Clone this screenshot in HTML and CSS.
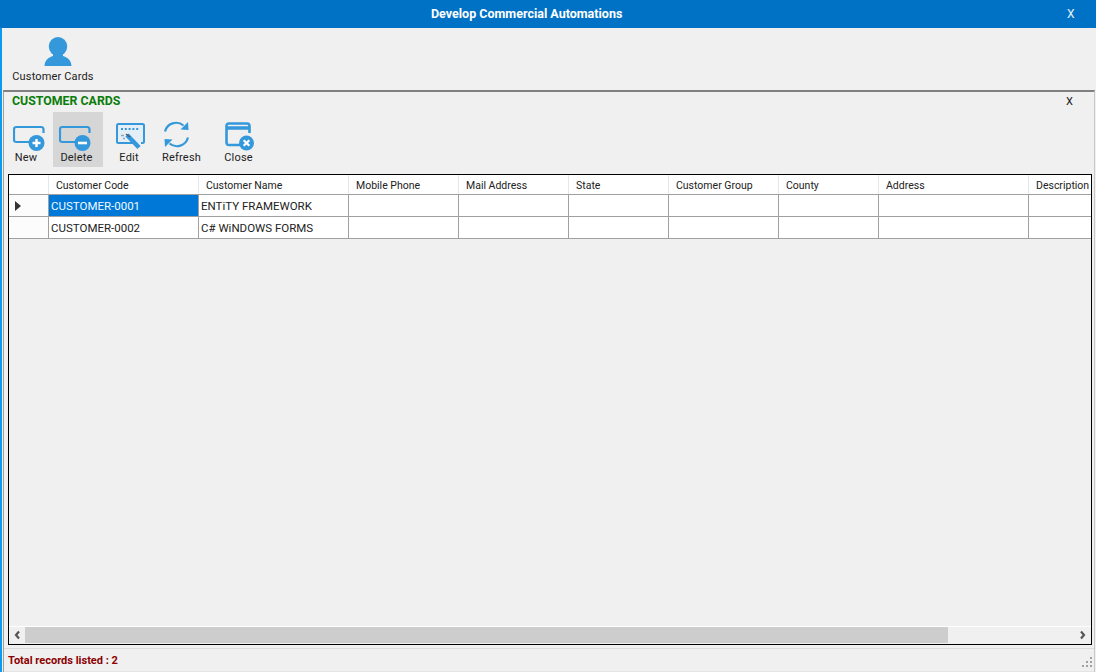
FILE: index.html
```html
<!DOCTYPE html>
<html lang="en">
<head>
<meta charset="utf-8">
<title>Develop Commercial Automations</title>
<link rel="stylesheet" href="styles.css">
</head>
<body>
<div class="app">
  <header class="titlebar">
    <span class="title">Develop Commercial Automations</span>
    <span class="close-x">X</span>
  </header>
  <div class="main">
    <nav class="ribbon">
      <div class="ribbon-item">
        <svg class="user-icon" width="30" height="30" viewBox="0 0 30 30"><ellipse cx="15" cy="9.500" rx="9.200" ry="9.500" fill="#3498db"/><path d="M10 16 L20 16 L20 19 C24 20.500 28 22 28.500 29 L1.500 29 C2 22 6 20.500 10 19Z" fill="#3498db"/></svg>
        <span class="ribbon-label">Customer Cards</span>
      </div>
    </nav>
    <section class="panel">
      <div class="panel-head">
        <h1 class="panel-title">CUSTOMER CARDS</h1>
        <span class="panel-x">X</span>
      </div>
      <div class="toolbar">
        <div class="tool tool-new">
          <svg width="32" height="26" viewBox="0 0 32 26"><path d="M1 15V4.500Q1 2 3.500 2H28Q30.500 2 30.500 4.500V8M1 15Q1 17 3.500 17H16" fill="none" stroke="#3498db" stroke-width="2.200"/><circle cx="23.500" cy="18" r="8" fill="#3498db"/><path d="M19.500 18H27.500M23.500 14V22" stroke="#fff" stroke-width="2.400"/></svg>
          <span>New</span>
        </div>
        <div class="tool tool-delete">
          <svg width="32" height="26" viewBox="0 0 32 26"><path d="M1 15V4.500Q1 2 3.500 2H28Q30.500 2 30.500 4.500V8M1 15Q1 17 3.500 17H16" fill="none" stroke="#3498db" stroke-width="2.200"/><circle cx="23.500" cy="18" r="8" fill="#3498db"/><path d="M19 18H28" stroke="#fff" stroke-width="2.600"/></svg>
          <span>Delete</span>
        </div>
        <div class="tool tool-edit">
          <svg width="30" height="28" viewBox="0 0 30 28"><path d="M18 20H2.500Q1 20 1 18.500V2.500Q1 1 2.500 1H26.500Q28 1 28 2.500V18.500Q28 20 26.500 20H25" fill="#e3eef6" stroke="#3498db" stroke-width="2"/><path d="M5 6H24" stroke="#3498db" stroke-width="1.800" stroke-dasharray="2 1.800"/><path d="M5 12.500H8M7 15.500H9" stroke="#8fa6b5" stroke-width="1.500"/><path d="M11 12L23 24.500" stroke="#3498db" stroke-width="4.500"/><path d="M10 11L14 14" stroke="#4a5a66" stroke-width="1.500"/></svg>
          <span>Edit</span>
        </div>
        <div class="tool tool-refresh">
          <svg width="27" height="27" viewBox="0 0 27 27"><path d="M2 10.500A11.500 11.500 0 0 1 20.500 4.500M25 16.500A11.500 11.500 0 0 1 6.500 22.500" fill="none" stroke="#3498db" stroke-width="2.200"/><path d="M17.500 8.500L25.500 9L25 1Z" fill="#3498db"/><path d="M9.500 18.500L1.500 18L2 26Z" fill="#3498db"/></svg>
          <span>Refresh</span>
        </div>
        <div class="tool tool-close">
          <svg width="30" height="29" viewBox="0 0 30 29"><path d="M15 23H4Q1.500 23 1.500 20.500V4Q1.500 1.500 4 1.500H22Q24.500 1.500 24.500 4V11" fill="none" stroke="#3498db" stroke-width="2.600"/><path d="M2 6H24" stroke="#3498db" stroke-width="3.500"/><circle cx="21.500" cy="21" r="7.500" fill="#3498db"/><path d="M18.700 18.200L24.300 23.800M24.300 18.200L18.700 23.800" stroke="#fff" stroke-width="2.200"/></svg>
          <span>Close</span>
        </div>
      </div>
      <div class="grid-box">
        <div class="grid-area">
          <div class="row header-row">
            <div class="cell head-corner"></div>
            <div class="cell head">Customer Code</div>
            <div class="cell head">Customer Name</div>
            <div class="cell head">Mobile Phone</div>
            <div class="cell head">Mail Address</div>
            <div class="cell head">State</div>
            <div class="cell head">Customer Group</div>
            <div class="cell head">County</div>
            <div class="cell head">Address</div>
            <div class="cell head">Description</div>
          </div>
          <div class="row data-row">
            <div class="cell row-head"><span class="arrow"></span></div>
            <div class="cell selected">CUSTOMER-0001</div>
            <div class="cell">ENTiTY FRAMEWORK</div>
            <div class="cell"></div><div class="cell"></div><div class="cell"></div><div class="cell"></div><div class="cell"></div><div class="cell"></div><div class="cell"></div>
          </div>
          <div class="row data-row">
            <div class="cell row-head"></div>
            <div class="cell">CUSTOMER-0002</div>
            <div class="cell">C# WiNDOWS FORMS</div>
            <div class="cell"></div><div class="cell"></div><div class="cell"></div><div class="cell"></div><div class="cell"></div><div class="cell"></div><div class="cell"></div>
          </div>
        </div>
        <div class="hscroll">
          <svg class="chev" width="16" height="16" viewBox="0 0 16 16"><path d="M10 4.500L7 8L10 11.500" fill="none" stroke="#555" stroke-width="2.200"/></svg>
          <div class="track"><div class="thumb"></div></div>
          <svg class="chev" width="16" height="16" viewBox="0 0 16 16"><path d="M6 4.500L9 8L6 11.500" fill="none" stroke="#555" stroke-width="2.200"/></svg>
        </div>
      </div>
      <footer class="status">
        <span class="status-text">Total records listed : 2</span>
        <svg class="grip" width="12" height="12" viewBox="0 0 12 12"><path d="M9 1h2v2H9zM5 5h2v2H5zM9 5h2v2H9zM1 9h2v2H1zM5 9h2v2H5zM9 9h2v2H9z" fill="#a0a0a0"/></svg>
      </footer>
    </section>
  </div>
</div>
</body>
</html>
```
FILE: styles.css
```css
* { box-sizing: border-box; }
html, body { margin: 0; padding: 0; }
body {
  width: 1096px;
  height: 672px;
  overflow: hidden;
  background: #f0f0f0;
  font-family: Roboto, "Liberation Sans", sans-serif;
  font-size: 12px;
  color: #222;
}
.app { display: flex; flex-direction: column; height: 672px; }
.titlebar {
  height: 28px;
  flex: none;
  background: #0072c6;
  color: #fff;
  display: flex;
  align-items: center;
  padding-left: 431px;
  position: relative;
}
.title { font-weight: 700; font-size: 12.500px; margin-top: -1px; }
.close-x { position: absolute; left: 1067px; top: 7px; font-size: 12px; color: #e8f2fa; }
.main {
  flex: 1;
  display: flex;
  flex-direction: column;
  border-left: 2px solid #0a9bef;
  min-height: 0;
}
.ribbon { height: 62px; flex: none; padding: 9px 0 0 10px; }
.ribbon-item { display: flex; flex-direction: column; align-items: center; width: 82px; }
.user-icon { display: block; margin: 0 0 3px 10px; }
.ribbon-label { font-size: 11px; line-height: 14px; letter-spacing: 0.15px; white-space: nowrap; }
.panel {
  flex: 1;
  margin-left: 1px;
  margin-right: 1px;
  border-top: 2px solid #808080;
  border-left: 1px solid #a0a0a0;
  border-right: 1px solid #c8c8c8;
  display: flex;
  flex-direction: column;
  min-height: 0;
}
.panel-head { height: 20px; flex: none; display: flex; justify-content: space-between; padding: 1px 21px 0 8px; }
.panel-title { margin: 0; font-size: 12.350px; line-height: 16px; font-weight: 700; color: #0a7d0a; }
.panel-x { font-size: 11px; line-height: 18px; color: #222; }
.toolbar { height: 55px; flex: none; display: flex; }
.tool { display: flex; flex-direction: column; align-items: center; justify-content: flex-end; height: 55px; padding-bottom: 2px; font-size: 11px; line-height: 14px; letter-spacing: 0.2px; }
.tool svg { display: block; flex: none; }
.tool-new { width: 44px; }
.tool-new svg { margin-left: 6px; }
.tool-delete { width: 50px; background: #d6d6d6; margin-left: 5px; padding-right: 3px; }
.tool-delete svg { margin-right: 3px; }
.tool-edit { width: 52px; }
.tool-edit svg { margin-left: 3px; }
.tool-refresh { width: 53px; }
.tool-refresh svg { margin: 0 11px 3px 0; }
.tool-close { width: 61px; }
.tool-close svg { margin-left: 3px; }
.grid-box {
  flex: 1;
  min-height: 0;
  margin: 7px 2px 0 4px;
  border: 1px solid #000;
  display: flex;
  flex-direction: column;
  overflow: hidden;
}
.grid-area { flex: 1; min-height: 0; overflow: hidden; }
.row {
  display: grid;
  grid-template-columns: 40px 150px 150px 110px 110px 100px 110px 100px 150px 100px;
  width: 1120px;
}
.header-row { height: 20px; background: #fff; border-bottom: 1px solid #a0a0a0; }
.data-row { height: 22px; background: #fff; border-bottom: 1px solid #a0a0a0; font-size: 11.500px; }
.cell {
  border-right: 1px solid #a0a0a0;
  padding-left: 2px;
  line-height: 22px;
  white-space: nowrap;
  overflow: hidden;
}
.head, .head-corner { border-right: 1px solid #e6e6ee; padding-left: 7px; line-height: 21px; font-size: 10.500px; }
.row-head { background: #fcfcfc; padding-left: 6px; }
.arrow {
  display: inline-block;
  width: 0; height: 0;
  border-left: 6px solid #333;
  border-top: 5px solid transparent;
  border-bottom: 5px solid transparent;
  margin-top: 6px;
  vertical-align: top;
}
.selected { background: #0078d7; color: #f4faff; }
.hscroll { height: 17px; flex: none; display: flex; align-items: center; border-top: 1px solid #fff; margin-bottom: 1px; }
.chev { flex: none; }
.track { flex: 1; height: 16px; }
.thumb { width: 923px; height: 16px; background: #cdcdcd; }
.status { height: 24px; flex: none; margin-top: 3px; border-top: 1px solid #dcdcdc; border-bottom: 1px solid #e4e4e4; display: flex; align-items: center; justify-content: space-between; padding: 0 1px 0 4px; }
.status-text { font-weight: 700; color: #8b0000; font-size: 11px; }
.grip { margin-top: 4px; }
```
